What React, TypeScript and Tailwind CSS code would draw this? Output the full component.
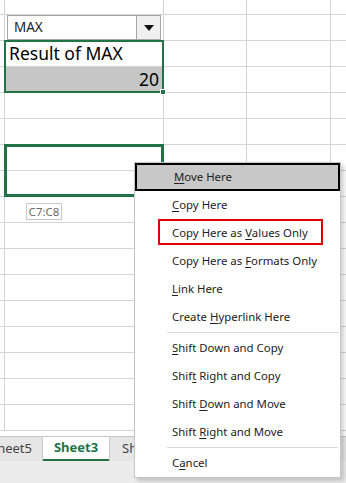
import type { ReactNode } from "react";

const ROWS = 17;
const colW = ["w-[5px]", "w-[159px]", "w-[83px]", "w-[84px]", "flex-1"];

type MenuItem = { pre: string; key: string; post: string } | "sep";

const menu: MenuItem[] = [
  { pre: "", key: "M", post: "ove Here" },
  { pre: "", key: "C", post: "opy Here" },
  { pre: "Copy Here as ", key: "V", post: "alues Only" },
  { pre: "Copy Here as ", key: "F", post: "ormats Only" },
  { pre: "", key: "L", post: "ink Here" },
  { pre: "Create ", key: "H", post: "yperlink Here" },
  "sep",
  { pre: "", key: "S", post: "hift Down and Copy" },
  { pre: "Shif", key: "t", post: " Right and Copy" },
  { pre: "Shift ", key: "D", post: "own and Move" },
  { pre: "Shift ", key: "R", post: "ight and Move" },
  "sep",
  { pre: "C", key: "a", post: "ncel" },
];

function cellContent(row: number, col: number): ReactNode {
  if (col !== 1) return null;
  if (row === 1) {
    return (
      <div className="flex h-full items-stretch pl-[2px] pr-[2px]">
        <div className="flex flex-1 items-center border border-[#a6a6a6] bg-white pl-[6px] text-[13.5px] text-[#222]">
          MAX
        </div>
        <div className="flex w-[24px] items-center justify-center border border-l-0 border-[#a6a6a6] bg-[#f0f0f0]">
          <svg width="10" height="6" viewBox="0 0 10 6">
            <path d="M0 0h10L5 6z" fill="#111" />
          </svg>
        </div>
      </div>
    );
  }
  if (row === 2) {
    return (
      <div className="flex h-full items-center pl-[4px] text-[17.5px] text-black">
        Result of MAX
      </div>
    );
  }
  if (row === 3) {
    return (
      <div className="flex h-full items-center justify-end bg-[#c6c6c6] pr-[4px] text-[17.5px] text-black">
        20
      </div>
    );
  }
  return null;
}

const App = () => {
  return (
    <div
      className="relative h-[483px] w-[346px] overflow-hidden bg-white"
      style={{ fontFamily: '"Noto Sans", "Open Sans", sans-serif' }}
    >
      {/* grid */}
      <div className="flex flex-col">
        {Array.from({ length: ROWS }).map((_, r) => (
          <div
            key={r}
            className={`flex border-b border-[#d4d4d4] ${r === 0 ? "h-[15px]" : "h-[26px]"}`}
          >
            {colW.map((w, c) => (
              <div
                key={c}
                className={`${w} shrink-0 ${c < 4 ? "border-r border-[#d4d4d4]" : ""}`}
              >
                {cellContent(r, c)}
              </div>
            ))}
          </div>
        ))}
        <div className="h-[5px]" />

        {/* sheet tabs */}
        <div className="flex h-[25px] border-t border-[#c8c8c8] bg-[#e6e6e6] text-[13px]">
          <div className="flex w-[43px] items-center border-r border-[#c8c8c8] text-[#444]">
            <span className="-ml-[10px]">Sheet5</span>
          </div>
          <div className="flex w-[66px] items-center justify-center border-b-2 border-[#217346] bg-white font-bold text-[#217346]">
            Sheet3
          </div>
          <div className="flex flex-1 items-center border-l border-[#c8c8c8] pl-[12px] text-[#444]">
            Sheet4
          </div>
        </div>
        <div className="h-[30px] bg-[#ececec]" />
      </div>

      {/* selections */}
      <div className="pointer-events-none absolute left-[4px] top-[40px] h-[53px] w-[160px] border-2 border-[#217346]" />
      <div className="absolute left-[160px] top-[89px] h-[6px] w-[6px] border border-white bg-[#217346]" />
      <div className="pointer-events-none absolute left-[4px] top-[144px] h-[53px] w-[160px] border-[3px] border-[#217346]" />

      {/* range tooltip */}
      <div className="absolute left-[26px] top-[203px] flex h-[17px] w-[36px] items-center justify-center border border-[#c8c8c8] bg-white text-[11.5px] text-[#6a6a6a]">
        C7:C8
      </div>

      {/* context menu */}
      <div className="absolute left-[134px] top-[162px] w-[207px] border border-[#c6c6c6] bg-white text-[11.4px] text-[#222] shadow-[3px_3px_4px_rgba(0,0,0,0.18)]">
        {menu.map((m, i) =>
          m === "sep" ? (
            <div key={i} className="flex h-[3px] items-center pl-[32px] pr-[2px]">
              <div className="h-px w-full bg-[#d7d7d7]" />
            </div>
          ) : (
            <div
              key={i}
              className={`flex h-[28px] items-center pl-[37px] ${
                i === 0 ? "border-2 border-black bg-[#c8c8c8] pl-[35px]" : ""
              }`}
            >
              <span>
                {m.pre}
                <span className="underline underline-offset-2">{m.key}</span>
                {m.post}
              </span>
            </div>
          ),
        )}
      </div>

      {/* red highlight */}
      <div className="pointer-events-none absolute left-[158px] top-[219px] h-[26px] w-[165px] border-2 border-[#e00000]" />
    </div>
  );
};

export default App;
